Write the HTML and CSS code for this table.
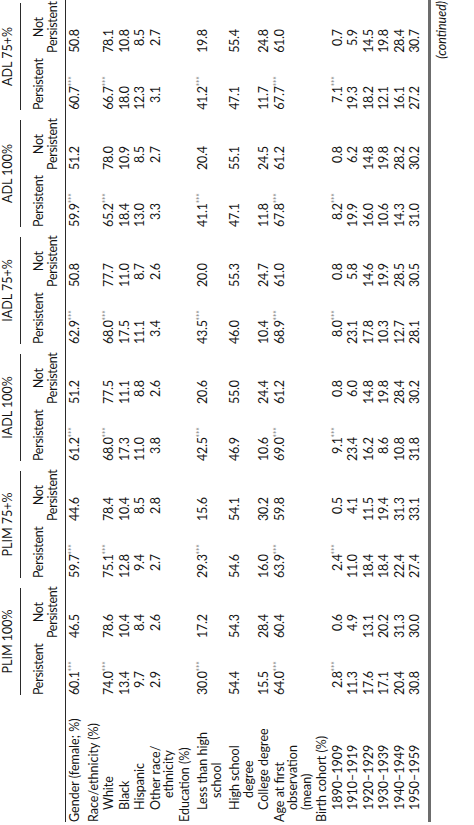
FILE: index.html
```html
<!DOCTYPE html>
<html>
<head>
<meta charset="utf-8">
<link rel="stylesheet" href="styles.css">
</head>
<body>
<div class="page">
  <div class="sheet">
    <table class="data">
      <colgroup>
        <col class="c-lab">
        <col class="c-p"><col class="c-n">
        <col class="c-p"><col class="c-n">
        <col class="c-p"><col class="c-n">
        <col class="c-p"><col class="c-n">
        <col class="c-p"><col class="c-n">
        <col class="c-p"><col class="c-n">
      </colgroup>
      <thead>
        <tr class="grp">
          <th></th>
          <th colspan="2"><div class="span">PLIM 100%</div></th>
          <th colspan="2"><div class="span">PLIM 75+%</div></th>
          <th colspan="2"><div class="span">IADL 100%</div></th>
          <th colspan="2"><div class="span">IADL 75+%</div></th>
          <th colspan="2"><div class="span">ADL 100%</div></th>
          <th colspan="2"><div class="span">ADL 75+%</div></th>
        </tr>
        <tr class="sub">
          <th></th>
          <th>Persistent</th><th><span class="nt">Not<br>Persistent</span></th>
          <th>Persistent</th><th><span class="nt">Not<br>Persistent</span></th>
          <th>Persistent</th><th><span class="nt">Not<br>Persistent</span></th>
          <th>Persistent</th><th><span class="nt">Not<br>Persistent</span></th>
          <th>Persistent</th><th><span class="nt">Not<br>Persistent</span></th>
          <th>Persistent</th><th><span class="nt">Not<br>Persistent</span></th>
        </tr>
      </thead>
      <tbody>
        <tr class="r-gender">
          <td class="lab">Gender (female; %)</td>
          <td><i>60</i>.1<sup>***</sup></td><td><i>46</i>.5</td>
          <td><i>59</i>.7<sup>***</sup></td><td><i>44</i>.6</td>
          <td><i>61</i>.2<sup>***</sup></td><td><i>51</i>.2</td>
          <td><i>62</i>.9<sup>***</sup></td><td><i>50</i>.8</td>
          <td><i>59</i>.9<sup>***</sup></td><td><i>51</i>.2</td>
          <td><i>60</i>.7<sup>***</sup></td><td><i>50</i>.8</td>
        </tr>
        <tr class="r-1">
          <td class="lab">Race/ethnicity (%)</td>
          <td></td><td></td><td></td><td></td><td></td><td></td><td></td><td></td><td></td><td></td><td></td><td></td>
        </tr>
        <tr class="r-1">
          <td class="lab sub1">White</td>
          <td><i>74</i>.0<sup>***</sup></td><td><i>78</i>.6</td>
          <td><i>75</i>.1<sup>***</sup></td><td><i>78</i>.4</td>
          <td><i>68</i>.0<sup>***</sup></td><td><i>77</i>.5</td>
          <td><i>68</i>.0<sup>***</sup></td><td><i>77</i>.7</td>
          <td><i>65</i>.2<sup>***</sup></td><td><i>78</i>.0</td>
          <td><i>66</i>.7<sup>***</sup></td><td><i>78</i>.1</td>
        </tr>
        <tr class="r-1">
          <td class="lab sub1">Black</td>
          <td><i>13</i>.4</td><td><i>10</i>.4</td>
          <td><i>12</i>.8</td><td><i>10</i>.4</td>
          <td><i>17</i>.3</td><td><i>11</i>.1</td>
          <td><i>17</i>.5</td><td><i>11</i>.0</td>
          <td><i>18</i>.4</td><td><i>10</i>.9</td>
          <td><i>18</i>.0</td><td><i>10</i>.8</td>
        </tr>
        <tr class="r-1">
          <td class="lab sub1">Hispanic</td>
          <td><i>9</i>.7</td><td><i>8</i>.4</td>
          <td><i>9</i>.4</td><td><i>8</i>.5</td>
          <td><i>11</i>.0</td><td><i>8</i>.8</td>
          <td><i>11</i>.1</td><td><i>8</i>.7</td>
          <td><i>13</i>.0</td><td><i>8</i>.5</td>
          <td><i>12</i>.3</td><td><i>8</i>.5</td>
        </tr>
        <tr class="r-2">
          <td class="lab sub1">Other race/<br><span class="wrap">ethnicity</span></td>
          <td><i>2</i>.9</td><td><i>2</i>.6</td>
          <td><i>2</i>.7</td><td><i>2</i>.8</td>
          <td><i>3</i>.8</td><td><i>2</i>.6</td>
          <td><i>3</i>.4</td><td><i>2</i>.6</td>
          <td><i>3</i>.3</td><td><i>2</i>.7</td>
          <td><i>3</i>.1</td><td><i>2</i>.7</td>
        </tr>
        <tr class="r-1">
          <td class="lab">Education (%)</td>
          <td></td><td></td><td></td><td></td><td></td><td></td><td></td><td></td><td></td><td></td><td></td><td></td>
        </tr>
        <tr class="r-2 gap">
          <td class="lab sub1">Less than high<br><span class="wrap">school</span></td>
          <td><i>30</i>.0<sup>***</sup></td><td><i>17</i>.2</td>
          <td><i>29</i>.3<sup>***</sup></td><td><i>15</i>.6</td>
          <td><i>42</i>.5<sup>***</sup></td><td><i>20</i>.6</td>
          <td><i>43</i>.5<sup>***</sup></td><td><i>20</i>.0</td>
          <td><i>41</i>.1<sup>***</sup></td><td><i>20</i>.4</td>
          <td><i>41</i>.2<sup>***</sup></td><td><i>19</i>.8</td>
        </tr>
        <tr class="r-2 gap">
          <td class="lab sub1">High school<br><span class="wrap">degree</span></td>
          <td><i>54</i>.4</td><td><i>54</i>.3</td>
          <td><i>54</i>.6</td><td><i>54</i>.1</td>
          <td><i>46</i>.9</td><td><i>55</i>.0</td>
          <td><i>46</i>.0</td><td><i>55</i>.3</td>
          <td><i>47</i>.1</td><td><i>55</i>.1</td>
          <td><i>47</i>.1</td><td><i>55</i>.4</td>
        </tr>
        <tr class="r-1">
          <td class="lab sub1">College degree</td>
          <td><i>15</i>.5</td><td><i>28</i>.4</td>
          <td><i>16</i>.0</td><td><i>30</i>.2</td>
          <td><i>10</i>.6</td><td><i>24</i>.4</td>
          <td><i>10</i>.4</td><td><i>24</i>.7</td>
          <td><i>11</i>.8</td><td><i>24</i>.5</td>
          <td><i>11</i>.7</td><td><i>24</i>.8</td>
        </tr>
        <tr class="r-3">
          <td class="lab">Age at first<br><span class="wrap">observation</span><br><span class="wrap">(mean)</span></td>
          <td><i>64</i>.0<sup>***</sup></td><td><i>60</i>.4</td>
          <td><i>63</i>.9<sup>***</sup></td><td><i>59</i>.8</td>
          <td><i>69</i>.0<sup>***</sup></td><td><i>61</i>.2</td>
          <td><i>68</i>.9<sup>***</sup></td><td><i>61</i>.0</td>
          <td><i>67</i>.8<sup>***</sup></td><td><i>61</i>.2</td>
          <td><i>67</i>.7<sup>***</sup></td><td><i>61</i>.0</td>
        </tr>
        <tr class="r-1">
          <td class="lab">Birth cohort (%)</td>
          <td></td><td></td><td></td><td></td><td></td><td></td><td></td><td></td><td></td><td></td><td></td><td></td>
        </tr>
        <tr class="r-c">
          <td class="lab sub1">1890–1909</td>
          <td><i>2</i>.8<sup>***</sup></td><td><i>0</i>.6</td>
          <td><i>2</i>.4<sup>***</sup></td><td><i>0</i>.5</td>
          <td><i>9</i>.1<sup>***</sup></td><td><i>0</i>.8</td>
          <td><i>8</i>.0<sup>***</sup></td><td><i>0</i>.8</td>
          <td><i>8</i>.2<sup>***</sup></td><td><i>0</i>.8</td>
          <td><i>7</i>.1<sup>***</sup></td><td><i>0</i>.7</td>
        </tr>
        <tr class="r-c">
          <td class="lab sub1">1910–1919</td>
          <td><i>11</i>.3</td><td><i>4</i>.9</td>
          <td><i>11</i>.0</td><td><i>4</i>.1</td>
          <td><i>23</i>.4</td><td><i>6</i>.0</td>
          <td><i>23</i>.1</td><td><i>5</i>.8</td>
          <td><i>19</i>.9</td><td><i>6</i>.2</td>
          <td><i>19</i>.3</td><td><i>5</i>.9</td>
        </tr>
        <tr class="r-c">
          <td class="lab sub1">1920–1929</td>
          <td><i>17</i>.6</td><td><i>13</i>.1</td>
          <td><i>18</i>.4</td><td><i>11</i>.5</td>
          <td><i>16</i>.2</td><td><i>14</i>.8</td>
          <td><i>17</i>.8</td><td><i>14</i>.6</td>
          <td><i>16</i>.0</td><td><i>14</i>.8</td>
          <td><i>18</i>.2</td><td><i>14</i>.5</td>
        </tr>
        <tr class="r-c">
          <td class="lab sub1">1930–1939</td>
          <td><i>17</i>.1</td><td><i>20</i>.2</td>
          <td><i>18</i>.4</td><td><i>19</i>.4</td>
          <td><i>8</i>.6</td><td><i>19</i>.8</td>
          <td><i>10</i>.3</td><td><i>19</i>.9</td>
          <td><i>10</i>.6</td><td><i>19</i>.8</td>
          <td><i>12</i>.1</td><td><i>19</i>.8</td>
        </tr>
        <tr class="r-c">
          <td class="lab sub1">1940–1949</td>
          <td><i>20</i>.4</td><td><i>31</i>.3</td>
          <td><i>22</i>.4</td><td><i>31</i>.3</td>
          <td><i>10</i>.8</td><td><i>28</i>.4</td>
          <td><i>12</i>.7</td><td><i>28</i>.5</td>
          <td><i>14</i>.3</td><td><i>28</i>.2</td>
          <td><i>16</i>.1</td><td><i>28</i>.4</td>
        </tr>
        <tr class="r-c last">
          <td class="lab sub1">1950–1959</td>
          <td><i>30</i>.8</td><td><i>30</i>.0</td>
          <td><i>27</i>.4</td><td><i>33</i>.1</td>
          <td><i>31</i>.8</td><td><i>30</i>.2</td>
          <td><i>28</i>.1</td><td><i>30</i>.5</td>
          <td><i>31</i>.0</td><td><i>30</i>.2</td>
          <td><i>27</i>.2</td><td><i>30</i>.7</td>
        </tr>
      </tbody>
    </table>
    <div class="cont">(continued)</div>
  </div>
</div>
</body>
</html>
```

FILE: styles.css
```css
html, body {
  margin: 0;
  padding: 0;
  background: #ffffff;
}

.page {
  width: 474px;
  height: 825px;
  overflow: hidden;
}

.sheet {
  width: 825px;
  height: 474px;
  transform-origin: 0 0;
  transform: translateY(825px) rotate(-90deg);
  font-family: Lato, "Open Sans", "DejaVu Sans", sans-serif;
  font-size: 12.5px;
  color: #141414;
  background: #ffffff;
  overflow: hidden;
}

.data {
  border-collapse: collapse;
  table-layout: fixed;
  width: 829px;
  margin-left: 3px;
}

.c-lab { width: 127px; }
.c-p { width: 57px; }
.c-n { width: 60px; }

.data th,
.data td {
  padding: 0;
  font-weight: normal;
  text-align: left;
  vertical-align: top;
  line-height: 13.5px;
  white-space: nowrap;
}

.grp th {
  height: 21px;
  padding-top: 1px;
}

.span {
  text-align: center;
  border-bottom: 1px solid #2a2a2a;
  margin: 0 10px 0 0;
  height: 19px;
}

.sub th {
  height: 43px;
  padding-top: 10px;
  box-sizing: border-box;
  border-bottom: 1px solid #2a2a2a;
  letter-spacing: -0.3px;
}

.nt {
  display: inline-block;
  text-align: center;
}

.data td {
  padding-top: 2px;
  letter-spacing: -0.3px;
}

.data td.lab {
  letter-spacing: 0;
}

.data td i {
  font-style: normal;
  display: inline-block;
  width: 14px;
  text-align: right;
}

.data td sup {
  font-size: 8.5px;
  color: #8a8a8a;
  vertical-align: 4px;
  line-height: 0;
  letter-spacing: -0.3px;
}

.r-gender td { height: 17px; }
.r-1 td { height: 13.5px; }
.r-2 td { height: 27px; }
.r-3 td { height: 40.5px; }
.r-c td { height: 11.5px; }
.gap td { padding-top: 5px; }
.last td { padding-bottom: 6px; }

.lab {
  white-space: normal;
}

.sub1 {
  padding-left: 12px !important;
}

.wrap {
  padding-left: 12px;
}

.data tbody tr:last-child td {
  border-bottom: 3px solid #6c6c6c;
}

.cont {
  text-align: right;
  font-style: italic;
  padding-top: 3px;
  padding-right: 1px;
  width: 825px;
  box-sizing: border-box;
}
```
